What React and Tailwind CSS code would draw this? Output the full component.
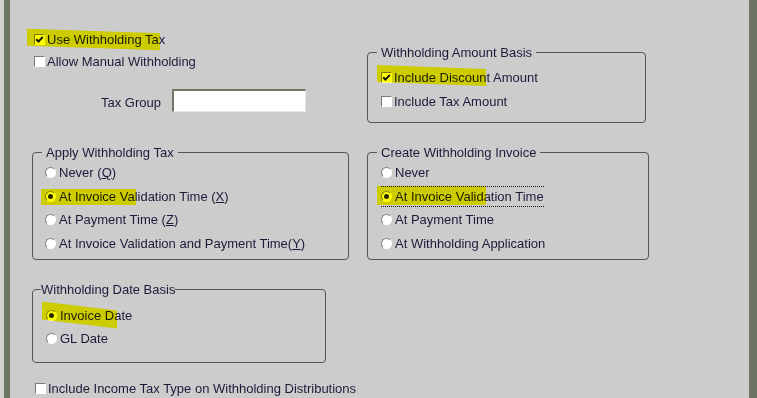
import React from 'react';

function Check({ checked }) {
  return (
    <span className="flex items-center justify-center w-[11px] h-[11px] shrink-0 bg-white border border-t-[#7a7a7a] border-l-[#7a7a7a] border-r-white border-b-white">
      {checked && (
        <svg width="9" height="9" viewBox="0 0 9 9">
          <path d="M1.2 4.2 L3.5 6.6 L7.8 1.8" fill="none" stroke="#111" strokeWidth="2" />
        </svg>
      )}
    </span>
  );
}

function Radio({ on }) {
  return (
    <span className="flex items-center justify-center w-[11px] h-[11px] shrink-0 rounded-full bg-white border border-t-[#808080] border-l-[#808080] border-r-white border-b-white">
      {on && <span className="w-[5px] h-[5px] rounded-full bg-[#2a2a2a]" />}
    </span>
  );
}

function Mark({ className }) {
  return <span className={`pointer-events-none absolute bg-[#ffff00] mix-blend-multiply ${className}`} />;
}

export default function App() {
  return (
    <div className="flex w-[757px] h-[398px] overflow-hidden bg-[#cccccc] text-[13px] leading-[15px] text-[#1b1b3a] font-['Liberation_Sans',Arial,sans-serif]">
      <div className="w-[4px] bg-[#d0d0d0]" />
      <div className="w-[6px] bg-[#6b7561]" />

      <div className="flex-1 flex flex-col">
        {/* top block */}
        <div className="flex h-[123px]">
          <div className="w-[357px] pl-[24px] pt-[28px] flex flex-col">
            <div className="relative flex items-center h-[22px] gap-[2px]">
              <Check checked />
              <span>Use Withholding Tax</span>
              <Mark className="left-[-7px] top-[3px] w-[133px] h-[17px] skew-y-[2deg]" />
            </div>
            <div className="flex items-center h-[22px] gap-[2px]">
              <Check />
              <span>Allow Manual Withholding</span>
            </div>
            <div className="flex items-center h-[23px] mt-[17px]">
              <span className="w-[127px] text-right pt-[3px]">Tax Group</span>
              <input
                className="ml-[11px] w-[134px] h-[23px] bg-white outline-none border-t-2 border-l-2 border-r border-b border-t-[#6f7767] border-l-[#6f7767] border-r-[#e6e6e6] border-b-[#e6e6e6]"
                readOnly
              />
            </div>
          </div>

          <fieldset className="mt-[45px] w-[279px] h-[78px] border border-[#555555] rounded-[4px]">
            <legend className="ml-[9px] px-[4px] leading-[15px]">Withholding Amount Basis</legend>
            <div className="pl-[13px] pt-[5px] pb-[9px]">
              <div className="relative flex items-center h-[24px] gap-[2px]">
                <Check checked />
                <span>Include Discount Amount</span>
                <Mark className="left-[-4px] top-[2px] w-[109px] h-[17px] skew-y-[2deg]" />
              </div>
              <div className="flex items-center h-[24px] gap-[2px]">
                <Check />
                <span>Include Tax Amount</span>
              </div>
            </div>
          </fieldset>
        </div>

        {/* radio groups */}
        <div className="flex mt-[22px] pl-[22px]">
          <fieldset className="w-[317px] border border-[#555555] rounded-[4px]">
            <legend className="ml-[9px] px-[4px] leading-[15px]">Apply Withholding Tax</legend>
            <div className="pl-[12px] pt-[1px] pb-[4px]">
              <div className="flex items-center h-[23.5px] gap-[3px]">
                <Radio />
                <span>Never (<u>Q</u>)</span>
              </div>
              <div className="relative flex items-center h-[23.5px] gap-[3px]">
                <Radio on />
                <span>At Invoice Validation Time (<u>X</u>)</span>
                <Mark className="left-[-4px] top-[4px] w-[95px] h-[16px]" />
              </div>
              <div className="flex items-center h-[23.5px] gap-[3px]">
                <Radio />
                <span>At Payment Time (<u>Z</u>)</span>
              </div>
              <div className="flex items-center h-[23.5px] gap-[3px]">
                <Radio />
                <span>At Invoice Validation and Payment Time(<u>Y</u>)</span>
              </div>
            </div>
          </fieldset>

          <fieldset className="ml-[18px] w-[282px] border border-[#555555] rounded-[4px]">
            <legend className="ml-[9px] px-[4px] leading-[15px]">Create Withholding Invoice</legend>
            <div className="pl-[13px] pt-[1px] pb-[4px]">
              <div className="flex items-center h-[23.5px] gap-[3px]">
                <Radio />
                <span>Never</span>
              </div>
              <div className="relative flex items-center h-[23.5px]">
                <span className="inline-flex items-center h-[21px] gap-[3px] border-y border-dotted border-[#111111]">
                  <Radio on />
                  <span>At Invoice Validation Time</span>
                </span>
                <Mark className="left-[-4px] top-[1px] w-[109px] h-[19px]" />
              </div>
              <div className="flex items-center h-[23.5px] gap-[3px]">
                <Radio />
                <span>At Payment Time</span>
              </div>
              <div className="flex items-center h-[23.5px] gap-[3px]">
                <Radio />
                <span>At Withholding Application</span>
              </div>
            </div>
          </fieldset>
        </div>

        {/* date basis */}
        <div className="flex mt-[22px] pl-[22px]">
          <fieldset className="w-[294px] border border-[#555555] rounded-[4px]">
            <legend className="ml-[8px] leading-[15px]">Withholding Date Basis</legend>
            <div className="pl-[13px] pt-[7px] pb-[12px]">
              <div className="relative flex items-center h-[23px] gap-[3px]">
                <Radio on />
                <span>Invoice Date</span>
                <Mark className="left-[-4px] top-[2px] w-[75px] h-[18px] skew-y-[7deg]" />
              </div>
              <div className="flex items-center h-[23px] gap-[3px]">
                <Radio />
                <span>GL Date</span>
              </div>
            </div>
          </fieldset>
        </div>

        <div className="flex items-center h-[20px] mt-[15px] pl-[25px] gap-[2px]">
          <Check />
          <span>Include Income Tax Type on Withholding Distributions</span>
        </div>
      </div>

      <div className="w-[8px] bg-[#6b7561]" />
    </div>
  );
}
